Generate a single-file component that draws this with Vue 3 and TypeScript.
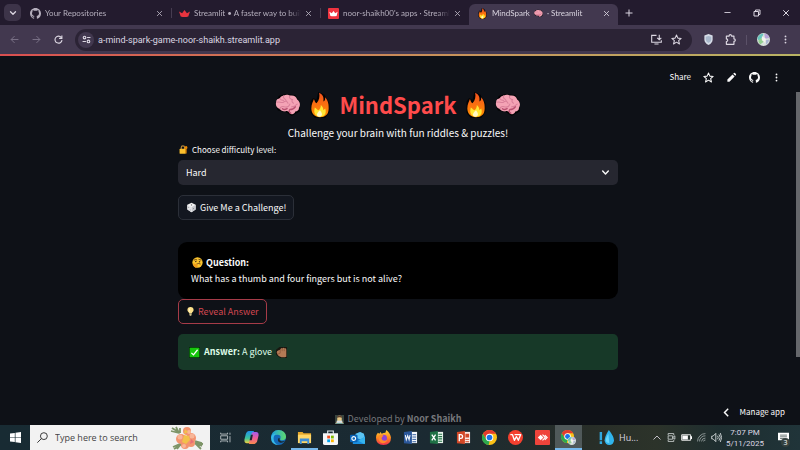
<script setup lang="ts">
import { ref } from 'vue'

interface Tab {
  title: string
  icon: string
  active?: boolean
}

const tabs: Tab[] = [
  { title: 'Your Repositories', icon: 'github' },
  { title: 'Streamlit • A faster way to build', icon: 'crown' },
  { title: "noor-shaikh00's apps · Streamlit", icon: 'crown-box' },
  { title: 'MindSpark', icon: 'fire', active: true },
]

const pinned = [
  { icon: 'taskview', label: 'Task View' },
  { icon: 'copilot', label: 'Copilot' },
  { icon: 'edge', label: 'Edge' },
  { icon: 'folder', label: 'File Explorer', open: true },
  { icon: 'store', label: 'Store' },
  { icon: 'outlook', label: 'Outlook' },
  { icon: 'firefox', label: 'Firefox' },
  { icon: 'word', label: 'Word' },
  { icon: 'excel', label: 'Excel' },
  { icon: 'ppt', label: 'PowerPoint' },
  { icon: 'chrome', label: 'Chrome' },
  { icon: 'wps', label: 'WPS Office' },
  { icon: 'anydesk', label: 'AnyDesk' },
  { icon: 'chrome-profile', label: 'Chrome profile', open: true, active: true },
]

const url = ref('a-mind-spark-game-noor-shaikh.streamlit.app')
const level = ref('Hard')
const search = ref('')
</script>

<template>
  <svg class="sprites" aria-hidden="true">
    <defs>
      <linearGradient id="g-fire" x1="0" y1="0" x2="0" y2="1">
        <stop offset="0" stop-color="#f4511e" /><stop offset="1" stop-color="#ff9100" />
      </linearGradient>
      <linearGradient id="g-edge" x1="0" y1="0" x2="1" y2="0">
        <stop offset="0" stop-color="#1b9de2" /><stop offset="1" stop-color="#5fdc6c" />
      </linearGradient>
      <linearGradient id="g-fox" x1="0" y1="0" x2="0" y2="1">
        <stop offset="0" stop-color="#ffd43a" /><stop offset="0.5" stop-color="#ff8a1e" /><stop offset="1" stop-color="#f0304f" />
      </linearGradient>
      <linearGradient id="g-cop1" x1="0" y1="0" x2="0" y2="1">
        <stop offset="0" stop-color="#1f8ff0" /><stop offset="0.6" stop-color="#3cc59a" /><stop offset="1" stop-color="#f3cf3c" />
      </linearGradient>
      <linearGradient id="g-cop2" x1="0" y1="0" x2="0" y2="1">
        <stop offset="0" stop-color="#a05cf0" /><stop offset="0.5" stop-color="#ef5c9a" /><stop offset="1" stop-color="#f78b4c" />
      </linearGradient>
      <symbol id="github" viewBox="0 0 16 16">
        <path fill="currentColor" d="M8 0C3.58 0 0 3.58 0 8c0 3.54 2.29 6.53 5.47 7.59.4.07.55-.17.55-.38 0-.19-.01-.82-.01-1.49-2.01.37-2.53-.49-2.69-.94-.09-.23-.48-.94-.82-1.13-.28-.15-.68-.52-.01-.53.63-.01 1.08.58 1.23.82.72 1.21 1.87.87 2.33.66.07-.52.28-.87.51-1.07-1.78-.2-3.64-.89-3.64-3.95 0-.87.31-1.59.82-2.15-.08-.2-.36-1.02.08-2.12 0 0 .67-.21 2.2.82a7.6 7.6 0 0 1 4 0c1.53-1.04 2.2-.82 2.2-.82.44 1.1.16 1.92.08 2.12.51.56.82 1.27.82 2.15 0 3.07-1.87 3.75-3.65 3.95.29.25.54.73.54 1.48 0 1.07-.01 1.93-.01 2.2 0 .21.15.46.55.38A8 8 0 0 0 16 8c0-4.42-3.58-8-8-8z" />
      </symbol>
      <symbol id="crown" viewBox="0 0 16 16">
        <path fill="#e8343f" d="M0 5l4.500 2.500L8 3l3.500 4.500L16 5l-2.500 7.500q-5.500 1.500-11 0z" />
      </symbol>
      <symbol id="crown-box" viewBox="0 0 16 16">
        <rect width="16" height="16" rx="1.500" fill="#f0333f" />
        <path fill="#fff" d="M2 5.500l3.500 2L8 4.500l2.500 3 3.500-2-1.500 6q-4.500 1-9 0z" />
      </symbol>
      <symbol id="fire" viewBox="0 0 24 30">
        <path fill="#000" d="M10 0l7 3 6 10v10l-5 7H6l-5-6V11l3-4 4 2z" opacity=".8" />
        <path fill="url(#g-fire)" d="M11 1c6 3 5 7 5 10 2-1 2-3 2-5 4 5 4 9 4 13 0 7-4 10-10 10S2 25 2 19c0-5 2-8 3-11 1 2 1 4 3 5 3-3 4-7 3-12z" />
        <path fill="#ffe633" d="M6 18c2 1 3 3 4 3 2-1 3-3 3-6 2 2 3 4 3 6l2-2c2 6-1 9.500-6 9.500S4 25 6 18z" />
        <path fill="#fff9c4" d="M12 21c4 5 2 7.500-1 7.500S7 25 12 21z" />
      </symbol>
      <symbol id="brain" viewBox="0 0 28 24">
        <path fill="#000" opacity=".8" d="M4 2l7-2 11 1 5 8v10l-9 5-6-4-9-2-3-7z" />
        <path fill="#f4a3b5" d="M9 2c3-2 6-1 7 0 4-1 7 1 8 4 3 2 4 6 2 9 0 3-2 4-4 4-1 3-4 4-6 2-1-2-3-3-5-2-3 0-5-1-6-3-3 0-5-4-4-7 0-3 2-4 4-4 0-1 2-3 4-3z" />
        <path fill="none" stroke="#d9809a" stroke-width="1.200" stroke-linecap="round" d="M9 2c-1 3 2 3 3 5m4-5c-1 2 0 3 2 4m-13-1c1 2 3 2 4 2m-7 2c3-1 4 1 7 0 2-2 4-1 5 1m-9 6c1-2 3-3 5-2 3 1 5 0 6-3m3-5c-1 1-1 3 1 4m-2 4c2 0 4-1 6-3" />
        <path fill="none" stroke="#b85070" stroke-width="1.600" stroke-linecap="round" d="M17 21c-2-1-2-3-1-4m0 0q4 0 6-3M8 16c1 1 3 1 5 0" />
      </symbol>
      <symbol id="lock" viewBox="0 0 16 16">
        <path fill="none" stroke="#b98a3a" stroke-width="2" d="M4 8V4.500a3 3 0 0 1 6 0V8" />
        <rect x="1" y="6.500" width="11" height="9" rx="1.500" fill="#fbc02d" />
        <path fill="#f08c00" d="M11.500 2a2.700 2.700 0 0 1 2 5v8h-2V7a2.700 2.700 0 0 1 0-5z" />
      </symbol>
      <symbol id="die" viewBox="0 0 16 16">
        <path fill="#f5f5f5" d="M8 1l6 3v7l-6 4-6-4V4z" />
        <path fill="#c6c8cd" d="M8 7.500l6-3.500v7l-6 4z" />
        <path fill="#e3e4e8" d="M2 4l6 3.500V15l-6-4z" />
        <g fill="#666"><circle cx="8" cy="4.200" r=".9" /><circle cx="4" cy="7.500" r=".7" /><circle cx="6" cy="11.500" r=".7" /><circle cx="11" cy="9.500" r=".7" /></g>
      </symbol>
      <symbol id="think" viewBox="0 0 16 16">
        <circle cx="8" cy="8" r="7.500" fill="#fbc52d" />
        <path fill="none" stroke="#5d3a16" stroke-width="1.300" stroke-linecap="round" d="M3 4.500q2-2 4-.5m3-.5l3 1M7 10q2-1.500 5 0" />
        <circle cx="5.500" cy="6.500" r="1.100" fill="#4e2f14" /><circle cx="11" cy="6.800" r="1.100" fill="#4e2f14" />
        <path fill="#ef9a1a" d="M2 9q2 0 2 1.500l4-1q1 1-1.500 2l2 1q0 3-3 3Q1 14 2 9z" />
      </symbol>
      <symbol id="bulb" viewBox="0 0 16 16">
        <path fill="#fde18a" d="M8 0a5.500 5.500 0 0 1 5.500 5.500c0 3-2.500 3.500-3 5.500h-5c-.5-2-3-2.500-3-5.500A5.500 5.500 0 0 1 8 0z" />
        <path fill="#fff6ce" d="M7 2q-2 1-2 4l2 4z" /><path fill="#c9bb85" d="M6 11h4v3.500L8 16l-2-1.500z" />
      </symbol>
      <symbol id="check" viewBox="0 0 16 16">
        <rect width="16" height="16" fill="#052e0b" /><rect x="1" y="1" width="14" height="14" rx="1" fill="#16c60c" />
        <path fill="none" stroke="#fff" stroke-width="1.800" d="M3.500 8.500l3 3 6-7.500" />
      </symbol>
      <symbol id="fist" viewBox="0 0 16 16">
        <path fill="#191710" d="M0 4l5-4h11v16H6l-6-5z" />
        <path fill="#b47a55" d="M3 5l3-1 1-2q1-1 2 0l2-1q1 0 1.500 1Q15 1.500 15 4v10l-2 1H8Q2 13 1 8q0-2 2-3z" />
        <path fill="none" stroke="#855337" d="M6 4v5q-2 2-4 0M9 2.500V6m3-3v3" />
      </symbol>
      <symbol id="coder" viewBox="0 0 16 16">
        <rect width="16" height="16" fill="#38443f" /><path fill="#e7ca88" d="M4 6q0-5 4-5t4 5v5H4z" /><path fill="#5b402e" d="M3 5q1-5 5-4 4-1 5 4-5-2-10 0z" />
        <path fill="#e09c50" d="M1 16q1-6 7-5 6-1 7 5z" /><path fill="#d7dee2" d="M3 10h10v5H3z" /><path fill="#719e95" d="M1 14h14v2H1z" />
      </symbol>
      <symbol id="star" viewBox="0 0 16 16">
        <path fill="none" stroke="currentColor" stroke-width="1.500" stroke-linejoin="round" d="M8 1.500l2 4.500 4.800.4-3.700 3.200 1.200 4.900L8 11.900l-4.300 2.600 1.200-4.900L1.200 6.400 6 6z" />
      </symbol>
      <symbol id="dots" viewBox="0 0 16 16">
        <g fill="currentColor"><circle cx="8" cy="2.500" r="1.600" /><circle cx="8" cy="8" r="1.600" /><circle cx="8" cy="13.500" r="1.600" /></g>
      </symbol>
      <symbol id="pencil" viewBox="0 0 16 16">
        <path fill="currentColor" d="M2 14v-3L9.500 3.500l3 3L5 14zM10.500 2.500l1-1q1-.5 1.500 0l1.500 1.500q.5 1 0 1.500l-1 1z" />
      </symbol>
      <symbol id="close" viewBox="0 0 16 16"><path fill="none" stroke="currentColor" stroke-width="2" d="M2.500 2.500l11 11m0-11l-11 11" /></symbol>
      <symbol id="plus" viewBox="0 0 16 16"><path fill="none" stroke="currentColor" stroke-width="2" d="M8 1v14M1 8h14" /></symbol>
      <symbol id="minus" viewBox="0 0 16 16"><path fill="none" stroke="currentColor" stroke-width="2" d="M1 8h14" /></symbol>
      <symbol id="restore" viewBox="0 0 16 16"><path fill="none" stroke="currentColor" stroke-width="2" d="M2 5h9v9H2zM5 5V2h9v9h-3" /></symbol>
      <symbol id="down" viewBox="0 0 16 16"><path fill="none" stroke="currentColor" stroke-width="2.600" stroke-linecap="round" stroke-linejoin="round" d="M3 5.500l5 5 5-5" /></symbol>
      <symbol id="up" viewBox="0 0 16 16"><path fill="none" stroke="currentColor" stroke-width="1.700" d="M1 11l7-7 7 7" /></symbol>
      <symbol id="left" viewBox="0 0 16 16"><path fill="none" stroke="currentColor" stroke-width="2.600" d="M11 1.500L4.500 8l6.500 6.500" /></symbol>
      <symbol id="back" viewBox="0 0 16 16"><path fill="none" stroke="currentColor" stroke-width="1.700" d="M15 8H2m6-6L2 8l6 6" /></symbol>
      <symbol id="forward" viewBox="0 0 16 16"><path fill="none" stroke="currentColor" stroke-width="1.700" d="M1 8h13M8 2l6 6-6 6" /></symbol>
      <symbol id="reload" viewBox="0 0 16 16"><path fill="none" stroke="currentColor" stroke-width="2" d="M13 4.500A6.200 6.200 0 1 0 14.200 9M14 1v5H9" /></symbol>
      <symbol id="tune" viewBox="0 0 16 16">
        <g fill="none" stroke="currentColor" stroke-width="2"><circle cx="4.500" cy="4.500" r="2.300" /><path d="M9 4.500h6M1 11.500h6" /><circle cx="11.500" cy="11.500" r="2.300" /></g>
      </symbol>
      <symbol id="install" viewBox="0 0 16 16"><path fill="none" stroke="currentColor" stroke-width="1.600" d="M8 2H1v10h14V9M5 14.500h6M12 1v7M9 5.500l3 3 3-3" /></symbol>
      <symbol id="shield" viewBox="0 0 16 16"><path fill="#d7dde8" d="M8 0l6 2v6q0 5-6 8-6-3-6-8V2z" /><path fill="#a9b8cc" d="M8 3l4 1v4q0 3-4 5-4-2-4-5V4z" /></symbol>
      <symbol id="puzzle" viewBox="0 0 16 16"><path fill="none" stroke="currentColor" stroke-width="1.700" stroke-linejoin="round" d="M2 3h4q0-2 1.700-2t1.800 2H13v4q2 0 2 1.800T13 10.500V15H2v-4q2 0 2-1.800T2 7.200z" /></symbol>
      <symbol id="avatar" viewBox="0 0 16 16">
        <circle cx="8" cy="8" r="8" fill="#d9e2dc" /><path fill="#67c4bd" d="M1 5q3-5 7-4L6 6 3 9q-3 0-2-4z" /><path fill="#b8a3d8" d="M9 1q5 0 6 5l-5 1z" /><path fill="#94cf91" d="M5 6l4 4-5 4q-3-3-2-5z" /><path fill="#f4f2ee" d="M6 4l5 3-1 5-4-3z" /><path fill="#aab4d2" d="M11 9l4-1q-1 5-4 6z" />
      </symbol>
      <symbol id="windows" viewBox="0 0 16 16"><path fill="#fff" d="M0 2.300l7-1v6.200H0zM8 1.200L16 0v7.500H8zM0 8.500h7v6.200l-7-1zM8 8.500h8V16l-8-1.200z" /></symbol>
      <symbol id="magnifier" viewBox="0 0 16 16"><g fill="none" stroke="#333" stroke-width="1.400"><circle cx="10" cy="6" r="5" /><path d="M6.500 9.500L.5 15.500" /></g></symbol>
      <symbol id="flowers" viewBox="0 0 34 24">
        <g fill="none" stroke="#7d9468" stroke-width="1.800"><path d="M2 2l8 5M1 5l8 2M6 1l3 6M10 2v5M3 21l9-4M4 23l8-5M7 23l4-5M25 17l8 1M25 17l6 6M25 15l7 2M25 17l7 3" /></g>
        <g fill="#f3936f"><circle cx="17" cy="5" r="4" /><circle cx="21" cy="12" r="5" /><circle cx="11" cy="13" r="5" /><circle cx="15" cy="19" r="4" /><circle cx="21" cy="17" r="4" /></g>
        <g fill="#f8b698"><circle cx="19" cy="6" r="2" /><circle cx="10" cy="11" r="2.500" /><circle cx="22" cy="10" r="2.500" /><circle cx="14" cy="20" r="2" /></g>
        <path fill="#f2c14a" d="M14 9l5 1 1 4-4 4-4-2zM15 3l3 3-4 2z" /><path fill="#e86e75" d="M21 13l3 3-4 2z" />
      </symbol>
      <symbol id="taskview" viewBox="0 0 16 16"><path fill="none" stroke="#c6cdd0" stroke-width="1.200" d="M1 1v2h10V1M1 15v-2h10v2M1 5.500h10v5H1zM14.500 1v3m0 2v9" /></symbol>
      <symbol id="copilot" viewBox="0 0 16 16">
        <path fill="url(#g-cop1)" d="M5 1h5q1 0 .5 2L7.500 13q-.5 1-2 1H3q-3 0-2.500-4l1.500-6q1-3 3-3z" />
        <path fill="url(#g-cop2)" d="M11 15H6q-1 0-.5-2l3-10q.5-1 2-1H13q3 0 2.500 4L14 12q-1 3-3 3z" />
        <path fill="#1b2a33" d="M7.300 5h2.200L8.300 11H6z" />
      </symbol>
      <symbol id="edge" viewBox="0 0 16 16">
        <circle cx="8" cy="8" r="8" fill="#1469b8" /><path fill="url(#g-edge)" d="M0 8Q1 0 8 0t8 7q0 4-4 4-3 0-2-2 1-4-3-4-5 0-7 3z" />
        <path fill="#36b9e8" d="M0 8q1-4 5-4Q2 7 3 11t5 5Q0 16 0 8z" /><path fill="#1b2a33" d="M9.500 9Q8 12 13 12l2-.5q-2 2.500-5 2-4-1-2-5z" />
      </symbol>
      <symbol id="folder" viewBox="0 0 16 16"><path fill="#e5a82c" d="M1 2h5l1 1.500h8V9H1z" /><path fill="#ffd768" d="M1 5h14v9H1z" /><path fill="#3f8fd8" d="M3 9h10v6h-2v-3H5v3H3z" /></symbol>
      <symbol id="store" viewBox="0 0 16 16">
        <path fill="none" stroke="#dfe8ec" stroke-width="1.200" d="M5 4V1h6v3" /><path fill="#f4f7f9" d="M0 3.500h16V14q0 2-2 2H2q-2 0-2-2z" />
        <path fill="#f25022" d="M4.500 6h3v3h-3z" /><path fill="#7fba00" d="M8.500 6h3v3h-3z" /><path fill="#00a4ef" d="M4.500 10h3v3h-3z" /><path fill="#ffb900" d="M8.500 10h3v3h-3z" />
      </symbol>
      <symbol id="outlook" viewBox="0 0 16 16">
        <path fill="#1474c8" d="M4 6l6-4 6 4v8H4z" /><path fill="#5cc4f2" d="M6 4l5-2 4 2v4l-4 2-5-2z" /><path fill="#35b4ee" d="M3 15l13-8v7q0 1-1 1z" /><path fill="#1a8fe0" d="M3 8l12 7H3z" />
        <rect y="5" width="8" height="8" rx="1" fill="#0a63b5" /><circle cx="4" cy="9" r="2" fill="none" stroke="#fff" stroke-width="1.200" />
      </symbol>
      <symbol id="firefox" viewBox="0 0 16 16">
        <path fill="url(#g-fox)" d="M2 3l1.500 1L5 2l1 2q2-1 4-1l1-3q4 3 5 8 0 8-8 8T0 8q0-3 2-5z" /><circle cx="8" cy="8.800" r="3.700" fill="#9045d5" /><path fill="#ff8b2b" d="M3 6q3-2 5 0L6.500 7.500Q5 9 7 11q3 1 5-1-1 4-5 4-5-1-4-8z" />
      </symbol>
      <symbol id="word" viewBox="0 0 16 16">
        <path fill="#f4f7fb" d="M8 2h7v12H8z" /><path stroke="#2b579a" d="M10 5h4M10 7.500h4M10 10h4M10 12.500h4" /><path fill="#2b579a" d="M1 2l8.500-1v14L1 14z" /><path fill="none" stroke="#fff" stroke-width="1.100" d="M2.500 5.500l1 5L5 6l1.500 4.500 1-5" />
      </symbol>
      <symbol id="excel" viewBox="0 0 16 16">
        <path fill="#e9f4ed" d="M8 2h7v12H8z" /><path stroke="#217346" stroke-width="1.200" d="M10 4.500h4M10 7h4M10 9.500h4M10 12h4" /><path fill="#1e7145" d="M1 2l8.500-1v14L1 14z" /><path fill="none" stroke="#fff" stroke-width="1.400" d="M3 5l4 6m0-6l-4 6" />
      </symbol>
      <symbol id="ppt" viewBox="0 0 16 16">
        <path fill="#fbe9e4" d="M8 2h7v12H8z" /><path fill="#d24726" d="M10 4h4v4h-4zM10 9.500h4v1h-4zM10 12h4v1h-4z" /><path fill="#d24726" d="M1 2l8.500-1v14L1 14z" /><path fill="none" stroke="#fff" stroke-width="1.400" d="M3.500 12V5H5q2 0 2 2T5 9H3.500" />
      </symbol>
      <symbol id="chrome" viewBox="0 0 16 16">
        <circle cx="8" cy="8" r="8" fill="#fbc116" /><path fill="#e33b2e" d="M1 4a8 8 0 0 1 14 0H8L4.500 10z" /><path fill="#2da94f" d="M1 4l3.500 6L8 12l-1 4A8 8 0 0 1 1 4z" /><circle cx="8" cy="8" r="4" fill="#fff" /><circle cx="8" cy="8" r="3" fill="#1a73e8" />
      </symbol>
      <symbol id="wps" viewBox="0 0 16 16"><circle cx="8" cy="8" r="8" fill="#f4402f" /><path fill="none" stroke="#fff" stroke-width="1.400" stroke-linejoin="round" d="M2.500 5h2.300l2 6L9 7l2 4 2.500-6H7" /></symbol>
      <symbol id="anydesk" viewBox="0 0 16 16"><rect width="16" height="16" rx="1" fill="#ef443b" /><path fill="#fff" d="M6 5l3 3-3 3-3-3z" /><path fill="none" stroke="#fff" stroke-width="1.200" d="M8 5l3 3-3 3M10.500 5.500L13 8l-2.500 2.500" /></symbol>
      <symbol id="chrome-profile" viewBox="0 0 16 16">
        <use href="#chrome" x="0" y="0" width="14" height="14" /><use href="#avatar" x="7" y="7" width="9" height="9" />
      </symbol>
      <symbol id="humidity" viewBox="0 0 16 16"><path fill="#30b4ed" d="M10.500 0q5.500 7 5.500 11a5 5 0 0 1-10 0q0-4 4.500-11z" /><path fill="#6ad6fa" d="M10 4q-4 6-2 9l3 1z" /><path stroke="#30a8e0" stroke-width="2.600" d="M2 2v9m0 1v3" /></symbol>
      <symbol id="meet" viewBox="0 0 16 16"><path fill="none" stroke="#d7dcdd" stroke-width="1.400" d="M2 4V1h10v3M2 12v3h10v-3M2 5h8v6H2zM10 8l4-3v6z" /></symbol>
      <symbol id="battery" viewBox="0 0 16 16"><path fill="none" stroke="#fff" stroke-width="1.300" d="M1 4h13v8H1z" /><path fill="#fff" d="M2 5h8v6H2zM14 6h2v4h-2z" /></symbol>
      <symbol id="wifi" viewBox="0 0 16 16"><path fill="none" stroke="#aeb8b8" stroke-width="1.300" d="M1 15A14 14 0 0 1 15 1M4.500 15A10 10 0 0 1 15 5M8 15a7 7 0 0 1 7-6M11.500 15q0-2.500 3.500-2.500" /></symbol>
      <symbol id="volume" viewBox="0 0 16 16"><path fill="none" stroke="#d7dcdd" stroke-width="1.300" d="M1 6h2l4-4v12l-4-4H1zM9.500 5.500q2 2.500 0 5M11.500 3.500q4 4.500 0 9M13.500 1.500q4 6.500 0 13" /></symbol>
      <symbol id="note" viewBox="0 0 16 16"><path fill="#fff" d="M0 1h16v11H9l-3 3v-3H0z" /><path stroke="#52605f" stroke-width="1.200" d="M3 4.500h10M3 7h10M3 9.500h7" /></symbol>
    </defs>
  </svg>

  <div class="screen">
    <header class="tabstrip">
      <button class="tab-search" aria-label="Search tabs"><svg class="i8"><use href="#down" /></svg></button>
      <div v-for="tab in tabs" :key="tab.title" class="tab" :class="{ active: tab.active }">
        <svg class="i11"><use :href="'#' + tab.icon" /></svg>
        <span class="tab-title">{{ tab.title }}<template v-if="tab.active"><svg class="i9"><use href="#brain" /></svg>· Streamlit</template></span>
        <button aria-label="Close tab"><svg class="i7"><use href="#close" /></svg></button>
      </div>
      <button class="new-tab" aria-label="New tab"><svg class="i8"><use href="#plus" /></svg></button>
      <div class="window-controls">
        <button aria-label="Minimize"><svg class="i7"><use href="#minus" /></svg></button>
        <button aria-label="Restore"><svg class="i8"><use href="#restore" /></svg></button>
        <button aria-label="Close"><svg class="i8"><use href="#close" /></svg></button>
      </div>
    </header>

    <nav class="toolbar">
      <button class="dim" aria-label="Back"><svg class="i9"><use href="#back" /></svg></button>
      <button class="dim" aria-label="Forward"><svg class="i9"><use href="#forward" /></svg></button>
      <button aria-label="Reload"><svg class="i9"><use href="#reload" /></svg></button>
      <div class="omnibox">
        <button class="site-info" aria-label="Site information"><svg class="i9"><use href="#tune" /></svg></button>
        <input v-model="url" aria-label="Address" />
        <button aria-label="Install"><svg class="i11"><use href="#install" /></svg></button>
        <button aria-label="Bookmark"><svg class="i11"><use href="#star" /></svg></button>
      </div>
      <div class="extensions">
        <button aria-label="Shield"><svg class="i11"><use href="#shield" /></svg></button>
        <button aria-label="Extensions"><svg class="i11"><use href="#puzzle" /></svg></button>
        <span class="divider"></span>
        <button aria-label="Profile"><svg class="i13"><use href="#avatar" /></svg></button>
        <button aria-label="Menu"><svg class="i9"><use href="#dots" /></svg></button>
      </div>
    </nav>

    <div class="rainbow"></div>

    <div class="app">
      <div class="app-actions">
        <button>Share</button>
        <button aria-label="Favorite"><svg class="i11"><use href="#star" /></svg></button>
        <button aria-label="Edit"><svg class="i11"><use href="#pencil" /></svg></button>
        <button aria-label="GitHub"><svg class="i11"><use href="#github" /></svg></button>
        <button aria-label="More"><svg class="i9"><use href="#dots" /></svg></button>
      </div>

      <main class="column">
        <h1>
          <svg class="brain"><use href="#brain" /></svg>
          <svg class="flame"><use href="#fire" /></svg>
          <span>MindSpark</span>
          <svg class="flame"><use href="#fire" /></svg>
          <svg class="brain"><use href="#brain" /></svg>
        </h1>
        <p class="subtitle">Challenge your brain with fun riddles &amp; puzzles!</p>
        <label for="level"><svg class="i9"><use href="#lock" /></svg>Choose difficulty level:</label>
        <div class="select">
          <select id="level" v-model="level">
            <option>Easy</option>
            <option>Medium</option>
            <option>Hard</option>
          </select>
          <svg class="i9"><use href="#down" /></svg>
        </div>
        <button class="btn"><svg class="i11"><use href="#die" /></svg>Give Me a Challenge!</button>
        <section class="question">
          <h2><svg class="i11"><use href="#think" /></svg>Question:</h2>
          <p>What has a thumb and four fingers but is not alive?</p>
        </section>
        <button class="btn reveal"><svg class="i9"><use href="#bulb" /></svg>Reveal Answer</button>
        <section class="answer">
          <svg class="i11"><use href="#check" /></svg>
          <span><strong>Answer:</strong> A glove</span>
          <svg class="i11"><use href="#fist" /></svg>
        </section>
        <footer><svg class="i9"><use href="#coder" /></svg><span>Developed by <strong>Noor Shaikh</strong></span></footer>
      </main>

      <button class="manage"><svg class="i9"><use href="#left" /></svg>Manage app</button>
      <span class="scroll-thumb"></span>
    </div>

    <div class="taskbar">
      <button class="start" aria-label="Start"><svg class="i11"><use href="#windows" /></svg></button>
      <div class="search">
        <svg class="i11"><use href="#magnifier" /></svg>
        <input v-model="search" placeholder="Type here to search" aria-label="Search" />
        <svg class="flowers"><use href="#flowers" /></svg>
      </div>
      <div class="pinned">
        <button v-for="p in pinned" :key="p.icon" :aria-label="p.label" :class="{ open: p.open, active: p.active }">
          <svg :class="p.icon === 'taskview' ? 'i11' : 'i15'"><use :href="'#' + p.icon" /></svg>
        </button>
      </div>
      <div class="tray">
        <button class="weather"><svg class="i15"><use href="#humidity" /></svg>Hu...</button>
        <button aria-label="Hidden icons"><svg class="i8"><use href="#up" /></svg></button>
        <button aria-label="Meet now"><svg class="i9"><use href="#meet" /></svg></button>
        <button aria-label="Battery"><svg class="i11"><use href="#battery" /></svg></button>
        <button aria-label="Network"><svg class="i9"><use href="#wifi" /></svg></button>
        <button aria-label="Volume"><svg class="i11"><use href="#volume" /></svg></button>
        <button class="clock"><span>7:07 PM</span><span>5/11/2025</span></button>
        <button class="notes" aria-label="Notifications"><svg class="i11"><use href="#note" /></svg><span class="badge">3</span></button>
      </div>
    </div>
  </div>
</template>

<style>
body {
  margin: 0;
  background: #0e1117;
}
</style>

<style scoped>
* {
  box-sizing: border-box;
}
.sprites {
  position: absolute;
  width: 0;
  height: 0;
}
.screen {
  min-height: 100vh;
  display: flex;
  flex-direction: column;
  font-family: Roboto, "Noto Sans", sans-serif;
  font-size: 8px;
  color: #dcd7e2;
}
button,
input,
select {
  font: inherit;
  color: inherit;
  background: none;
  border: 0;
  padding: 0;
  margin: 0;
  outline: 0;
}
button {
  display: flex;
  align-items: center;
  justify-content: center;
}
svg {
  flex: none;
}
.i7 { width: 7px; height: 7px; }
.i8 { width: 8px; height: 8px; }
.i9 { width: 9px; height: 9px; }
.i11 { width: 11px; height: 11px; }
.i13 { width: 13px; height: 13px; }
.i15 { width: 15px; height: 15px; }

.tabstrip {
  display: flex;
  align-items: stretch;
  height: 25px;
  font-family: Lato, sans-serif;
  background: #231b2e;
}
.tab-search {
  width: 17px;
  height: 17px;
  margin: 4px 1px 4px 4px;
  border-radius: 5px;
  background: #3d3449;
}
.tab {
  display: flex;
  align-items: center;
  gap: 4px;
  flex: 0 1 149px;
  min-width: 0;
  height: 21px;
  margin-top: 4px;
  padding: 0 8px 3px;
  color: #b5afbd;
  position: relative;
}
.tab + .tab::before {
  content: "";
  position: absolute;
  left: 0;
  top: 4px;
  height: 10px;
  width: 1px;
  background: #463c50;
}
.tab.active {
  background: #42384f;
  border-radius: 6px 6px 0 0;
  color: #d8d3de;
}
.tab.active::before {
  display: none;
}
.tab-title {
  flex: 1;
  min-width: 0;
  overflow: hidden;
  white-space: nowrap;
  mask-image: linear-gradient(90deg, #000 88%, transparent);
}
.tab-title svg {
  margin: 0 4px;
  vertical-align: -2px;
}
.new-tab {
  width: 22px;
}
.window-controls {
  display: flex;
  margin-left: auto;
}
.window-controls button {
  width: 29px;
}

.toolbar {
  display: flex;
  align-items: center;
  height: 29px;
  padding: 0 3px;
  background: #42384f;
}
.toolbar > button {
  width: 22px;
  height: 22px;
}
.toolbar .dim {
  color: #7c7388;
}
.omnibox {
  flex: 1;
  display: flex;
  align-items: center;
  gap: 9px;
  height: 22px;
  margin-left: 6px;
  padding: 0 10px 0 3px;
  border-radius: 11px;
  background: #2b2335;
}
.site-info {
  width: 16px;
  height: 16px;
  margin-right: -5px;
  border-radius: 8px;
  background: #42384f;
}
.omnibox input {
  flex: 1;
  min-width: 0;
  font-size: 9px;
}
.extensions {
  display: flex;
  align-items: center;
  gap: 11px;
  padding: 0 7px 0 11px;
}
.divider {
  width: 1px;
  height: 10px;
  margin: 0 -1px;
  background: #5b5168;
}
.rainbow {
  height: 2px;
  background: linear-gradient(90deg, #d94f50, #c8915a 55%, #b9b464);
}

.app {
  position: relative;
  flex: 1;
  padding: 12px 4px 0 0;
  background: #0e1117;
  color: #fafafa;
  font-family: "Noto Sans CJK SC", sans-serif;
  font-size: 9px;
  line-height: 16px;
}
.app-actions {
  display: flex;
  justify-content: flex-end;
  align-items: center;
  gap: 12px;
  height: 18px;
  padding-right: 15px;
  font-size: 8px;
}
.column {
  display: flex;
  flex-direction: column;
  align-items: flex-start;
  max-width: 440px;
  margin: 0 auto;
}
h1 {
  align-self: center;
  display: flex;
  align-items: center;
  gap: 7px;
  height: 37px;
  margin: 0;
  font-size: 22px;
  line-height: 37px;
  color: #ff4b4b;
}
.brain {
  width: 26px;
  height: 22px;
}
.flame {
  width: 24px;
  height: 26px;
}
.subtitle {
  align-self: center;
  margin: 0;
  font-size: 10px;
  line-height: 20px;
}
label {
  display: flex;
  align-items: center;
  gap: 4px;
  height: 17px;
  padding: 0 0 4px 1px;
  font-size: 8px;
}
.select {
  display: flex;
  align-items: center;
  width: 100%;
  height: 25px;
  padding-right: 8px;
  border-radius: 5px;
  background: #262730;
}
.select select {
  flex: 1;
  height: 25px;
  padding-left: 8px;
  margin-right: -9px;
  appearance: none;
}
.select svg {
  pointer-events: none;
}
.btn {
  gap: 3px;
  height: 25px;
  margin-top: 10px;
  padding: 0 7px;
  border: 1px solid #2b2f38;
  border-radius: 5px;
  background: #131720;
}
.question {
  width: 100%;
  margin-top: 22px;
  padding: 12px 13px;
  border-radius: 9px;
  background: #000;
}
.question h2 {
  display: flex;
  align-items: center;
  gap: 3px;
  margin: 0;
  padding-left: 1px;
  font-size: 9px;
  line-height: 17px;
}
.question p {
  margin: 0;
}
.reveal {
  margin-top: 0;
  border-color: #a63b48;
  background: none;
  color: #d14650;
}
.answer {
  display: flex;
  align-items: center;
  gap: 4px;
  width: 100%;
  height: 36px;
  margin-top: 10px;
  padding: 0 11px;
  border-radius: 5px;
  background: #173928;
  color: #dffde9;
}
footer {
  align-self: center;
  display: flex;
  align-items: center;
  gap: 4px;
  height: 12px;
  margin-top: 43px;
  color: #75777b;
}
.manage {
  position: absolute;
  right: 15px;
  bottom: 5px;
  gap: 9px;
  font-size: 8px;
  line-height: 16px;
}
.scroll-thumb {
  position: absolute;
  top: 36px;
  right: 0;
  bottom: 68px;
  width: 4px;
  background: #65676b;
}

.taskbar {
  display: flex;
  align-items: stretch;
  height: 25px;
  font-family: "Open Sans", "Noto Sans", sans-serif;
  background: linear-gradient(90deg, #182b33, #1b2a32 55%, #282e28 74%, #2c332a 82%, #1e2e30 90%, #203439);
}
.start {
  width: 30px;
}
.search {
  display: flex;
  align-items: center;
  gap: 7px;
  width: 180px;
  padding-left: 7px;
  background: #f2f2f2;
  color: #444;
}
.search input {
  flex: 1;
  min-width: 0;
  font-size: 9px;
}
.search input::placeholder {
  color: #444;
  opacity: 1;
}
.flowers {
  width: 34px;
  height: 24px;
  margin-right: 6px;
}
.pinned {
  display: flex;
  flex: 0 1 370px;
  margin-left: 2px;
}
.pinned button {
  flex: 1;
  border-bottom: 2px solid transparent;
  border-top: 2px solid transparent;
}
.pinned .open {
  border-bottom-color: #76b9ed;
}
.pinned .active {
  background: #50595a;
  border-top-color: #50595a;
}
.tray {
  display: flex;
  align-items: stretch;
  margin-left: auto;
}
.tray button {
  width: 15px;
}
.tray .weather {
  width: 50px;
  gap: 5px;
  justify-content: flex-start;
  font-size: 9px;
}
.tray .clock {
  width: 42px;
  flex-direction: column;
  font-family: Roboto, sans-serif;
  line-height: 11px;
}
.tray .notes {
  position: relative;
  width: 34px;
}
.badge {
  position: absolute;
  right: 10px;
  bottom: 3px;
  width: 9px;
  height: 9px;
  border-radius: 5px;
  background: #35413f;
  font-size: 7px;
  line-height: 9px;
  text-align: center;
  color: #fff;
}
</style>
